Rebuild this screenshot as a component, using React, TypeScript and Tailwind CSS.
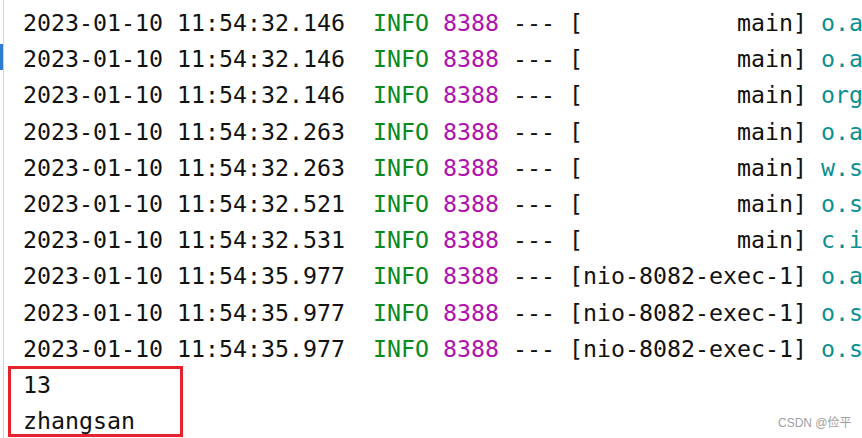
import React from "react";

type Line = { ts: string; thread: string; logger: string };

const lines: Line[] = [
  { ts: "2023-01-10 11:54:32.146", thread: "           main", logger: "o.a" },
  { ts: "2023-01-10 11:54:32.146", thread: "           main", logger: "o.a" },
  { ts: "2023-01-10 11:54:32.146", thread: "           main", logger: "org" },
  { ts: "2023-01-10 11:54:32.263", thread: "           main", logger: "o.a" },
  { ts: "2023-01-10 11:54:32.263", thread: "           main", logger: "w.s" },
  { ts: "2023-01-10 11:54:32.521", thread: "           main", logger: "o.s" },
  { ts: "2023-01-10 11:54:32.531", thread: "           main", logger: "c.i" },
  { ts: "2023-01-10 11:54:35.977", thread: "nio-8082-exec-1", logger: "o.a" },
  { ts: "2023-01-10 11:54:35.977", thread: "nio-8082-exec-1", logger: "o.s" },
  { ts: "2023-01-10 11:54:35.977", thread: "nio-8082-exec-1", logger: "o.s" },
];

export default function App() {
  return (
    <div className="relative w-[862px] h-[438px] bg-white overflow-hidden flex">
      <div className="w-[3px] flex flex-col">
        <div className="mt-[44px] h-[26px] bg-[#2f7bd1]" />
      </div>
      <div className="w-[1px] bg-[#d4d4d4]" />
      <div
        className="flex-1 pl-[19px] pt-[5px] overflow-hidden text-[23.25px] leading-[36.2px] text-[#111] whitespace-pre"
        style={{ fontFamily: '"DejaVu Sans Mono", "Liberation Mono", monospace' }}
      >
        {lines.map((l, i) => (
          <div key={i}>
            <span>{l.ts}  </span>
            <span className="text-[#0a8a1c]">INFO</span>
            <span> </span>
            <span className="text-[#b012b0]">8388</span>
            <span> --- [{l.thread}] </span>
            <span className="text-[#0a8f92]">{l.logger}</span>
          </div>
        ))}
        <div>13</div>
        <div>zhangsan</div>
      </div>
      <div className="absolute left-[8px] top-[366px] w-[175px] h-[71px] border-[3px] border-[#e8222c]" />
      <div
        className="absolute left-[778px] top-[414px] text-[12px] text-[#a0a0a0]"
        style={{ fontFamily: '"Liberation Sans", "Noto Sans CJK SC", sans-serif' }}
      >
        CSDN @俭平
      </div>
    </div>
  );
}
